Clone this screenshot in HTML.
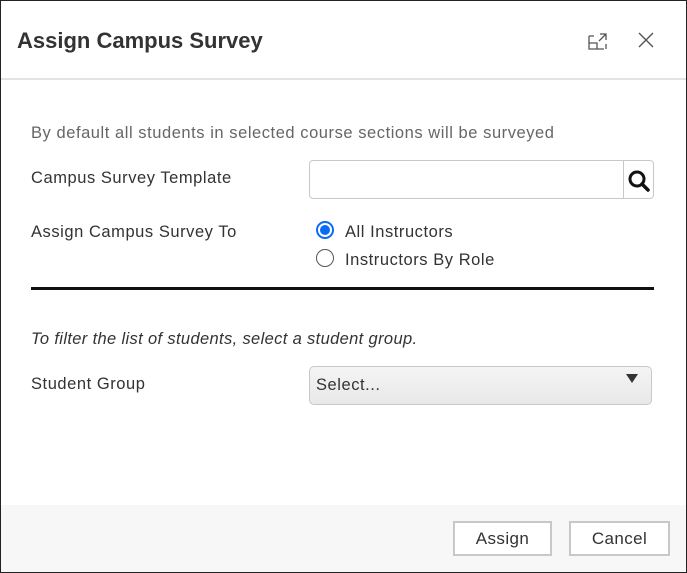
<!DOCTYPE html>
<html><head><style>
*{margin:0;padding:0;box-sizing:border-box}
body{width:687px;height:573px;background:#fff;font-family:"Liberation Sans",sans-serif;color:#333;position:relative;overflow:hidden}
.frame{position:absolute;left:0;top:0;width:687px;height:573px;border:1px solid #222}
.a{position:absolute;white-space:nowrap}
.lbl{font-size:16.5px;color:#333;letter-spacing:0.55px}
</style></head><body>
<div class="a" style="left:0;top:78px;width:687px;height:2px;background:#e3e3e3"></div>
<div class="a" style="left:17px;top:28px;font-size:22px;font-weight:bold;color:#333">Assign Campus Survey</div>
<svg class="a" style="left:588px;top:32px" width="20" height="18" viewBox="0 0 20 18"><path d="M1 4V17H16M1 11H9V17" fill="none" stroke="#555" stroke-width="1.3"/><path d="M1 4H6M12 2H18V8M18 2L11 9M18 12V17" fill="none" stroke="#555" stroke-width="1.3"/></svg>
<svg class="a" style="left:638px;top:32px" width="16" height="16"><path d="M1 1L15 15M15 1L1 15" stroke="#555" stroke-width="1.4"/></svg>
<div class="a lbl" style="left:31px;top:124px;color:#666">By default all students in selected course sections will be surveyed</div>
<div class="a lbl" style="left:31px;top:169px">Campus Survey Template</div>
<div class="a" style="left:309px;top:160px;width:345px;height:39px;border:1px solid #c8c8c8;border-radius:4px;background:#fff"></div>
<div class="a" style="left:623px;top:161px;width:1px;height:37px;background:#c8c8c8"></div>
<svg class="a" style="left:627px;top:169px" width="24" height="24"><circle cx="10" cy="10" r="7" fill="none" stroke="#111" stroke-width="3"/><path d="M15 15L21 21" stroke="#111" stroke-width="3.5" stroke-linecap="round"/></svg>
<div class="a lbl" style="left:31px;top:223px">Assign Campus Survey To</div>
<div class="a" style="left:316px;top:221px;width:18px;height:18px;border-radius:50%;border:2px solid #0a6cf5;background:#fff"></div>
<div class="a" style="left:320px;top:225px;width:10px;height:10px;border-radius:50%;background:#0a6cf5"></div>
<div class="a lbl" style="left:345px;top:223px">All Instructors</div>
<div class="a" style="left:316px;top:249px;width:18px;height:18px;border-radius:50%;border:1.5px solid #555;background:#fff"></div>
<div class="a lbl" style="left:345px;top:251px">Instructors By Role</div>
<div class="a" style="left:31px;top:287px;width:623px;height:3px;background:#111"></div>
<div class="a lbl" style="left:31px;top:330px;font-style:italic;letter-spacing:0.35px">To filter the list of students, select a student group.</div>
<div class="a lbl" style="left:31px;top:375px">Student Group</div>
<div class="a" style="left:309px;top:366px;width:343px;height:39px;border:1px solid #c8c8c8;border-radius:5px;background:linear-gradient(#f4f4f4,#e8e8e8)"></div>
<div class="a lbl" style="left:316px;top:376px">Select...</div>
<svg class="a" style="left:626px;top:374px" width="12" height="10"><path d="M0 0H12L6 9Z" fill="#333"/></svg>
<div class="a" style="left:0;top:505px;width:687px;height:68px;background:#f7f7f7"></div>
<div class="a" style="left:453px;top:521px;width:99px;height:35px;border:2px solid #c8c8c8;background:#fff;font-size:17px;text-align:center;line-height:31px;letter-spacing:0.4px">Assign</div>
<div class="a" style="left:569px;top:521px;width:101px;height:35px;border:2px solid #c8c8c8;background:#fff;font-size:17px;text-align:center;line-height:31px;letter-spacing:0.4px">Cancel</div>
<div class="frame"></div>
</body></html>
